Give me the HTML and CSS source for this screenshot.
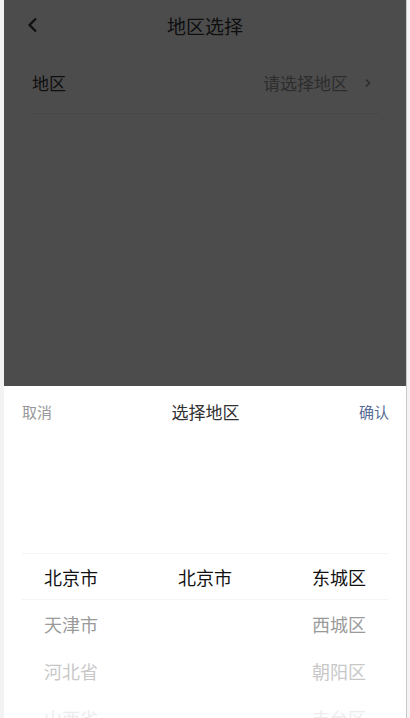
FILE: index.html
```html
<!DOCTYPE html>
<html lang="zh">
<head>
<meta charset="utf-8">
<link rel="stylesheet" href="styles.css">
</head>
<body>
<div class="frame">
  <header class="nav">
    <svg class="nav-back" width="12" height="16" viewBox="0 0 12 16"><path d="M9 1.5 L2.5 8 L9 14.5" fill="none" stroke="#323233" stroke-width="2.2"/></svg>
    <div class="nav-title">地区选择</div>
  </header>
  <div class="cell">
    <span class="cell-label">地区</span>
    <span class="cell-value">请选择地区</span>
    <svg class="cell-arrow" width="8" height="12" viewBox="0 0 8 12"><path d="M2 2.5 L5.5 6 L2 9.5" fill="none" stroke="#969799" stroke-width="1.6"/></svg>
  </div>
  <div class="overlay"></div>
  <div class="sheet">
    <div class="toolbar">
      <span class="tb-cancel">取消</span>
      <span class="tb-title">选择地区</span>
      <span class="tb-confirm">确认</span>
    </div>
    <div class="picker">
      <div class="frame-line"></div>
      <div class="col">
        <div class="item sel">北京市</div>
        <div class="item f1">天津市</div>
        <div class="item f2">河北省</div>
        <div class="item f3">山西省</div>
      </div>
      <div class="col">
        <div class="item sel">北京市</div>
      </div>
      <div class="col">
        <div class="item sel">东城区</div>
        <div class="item f1">西城区</div>
        <div class="item f2">朝阳区</div>
        <div class="item f3">丰台区</div>
      </div>
    </div>
  </div>
</div>
</body>
</html>
```

FILE: styles.css
```css
html, body {
  margin: 0;
  padding: 0;
  height: 718px;
  overflow: hidden;
  background: #f3f3f3;
  font-family: "Noto Sans CJK SC", "Noto Sans", sans-serif;
}
.frame {
  position: relative;
  margin-left: 4px;
  width: 402px;
  height: 718px;
  background: #fff;
  border-right: 1px solid #c8c8c8;
  overflow: hidden;
}
.nav {
  position: relative;
  height: 52px;
  display: flex;
  align-items: center;
  justify-content: center;
}
.nav-back {
  position: absolute;
  left: 23px;
  top: 17px;
}
.nav-title {
  font-size: 19px;
  color: #323233;
  line-height: 52px;
}
.cell {
  margin: 0 27px 0 28px;
  height: 61px;
  display: flex;
  align-items: center;
  border-bottom: 1px solid #ebedf0;
  font-size: 17px;
}
.cell-label {
  color: #323233;
  flex: 1;
}
.cell-value {
  color: #969799;
}
.cell-arrow {
  margin-left: 16px;
  margin-right: 7px;
}
.overlay {
  position: absolute;
  inset: 0;
  background: rgba(0, 0, 0, 0.7);
}
.sheet {
  position: absolute;
  left: 0;
  right: 0;
  top: 386px;
  bottom: 0;
  background: #fff;
}
.toolbar {
  height: 50px;
  display: flex;
  align-items: center;
  justify-content: space-between;
  padding: 0 17px 0 18px;
}
.tb-cancel {
  font-size: 15px;
  color: #969799;
}
.tb-confirm {
  font-size: 15px;
  color: #576b95;
}
.tb-title {
  font-size: 17px;
  color: #323233;
}
.picker {
  position: relative;
  display: flex;
  padding-top: 117px;
}
.frame-line {
  position: absolute;
  left: 18px;
  right: 18px;
  top: 117px;
  height: 47px;
  box-sizing: border-box;
  border-top: 1px solid #f4f4f6;
  border-bottom: 1px solid #f4f4f6;
}
.col {
  flex: 1;
  display: flex;
  flex-direction: column;
}
.item {
  height: 47px;
  display: flex;
  align-items: center;
  justify-content: center;
  font-size: 18px;
  color: #111;
}
.item.f1 { color: #9a9a9a; }
.item.f2 { color: #c8c8c8; }
.item.f3 { color: #ececec; }
```
